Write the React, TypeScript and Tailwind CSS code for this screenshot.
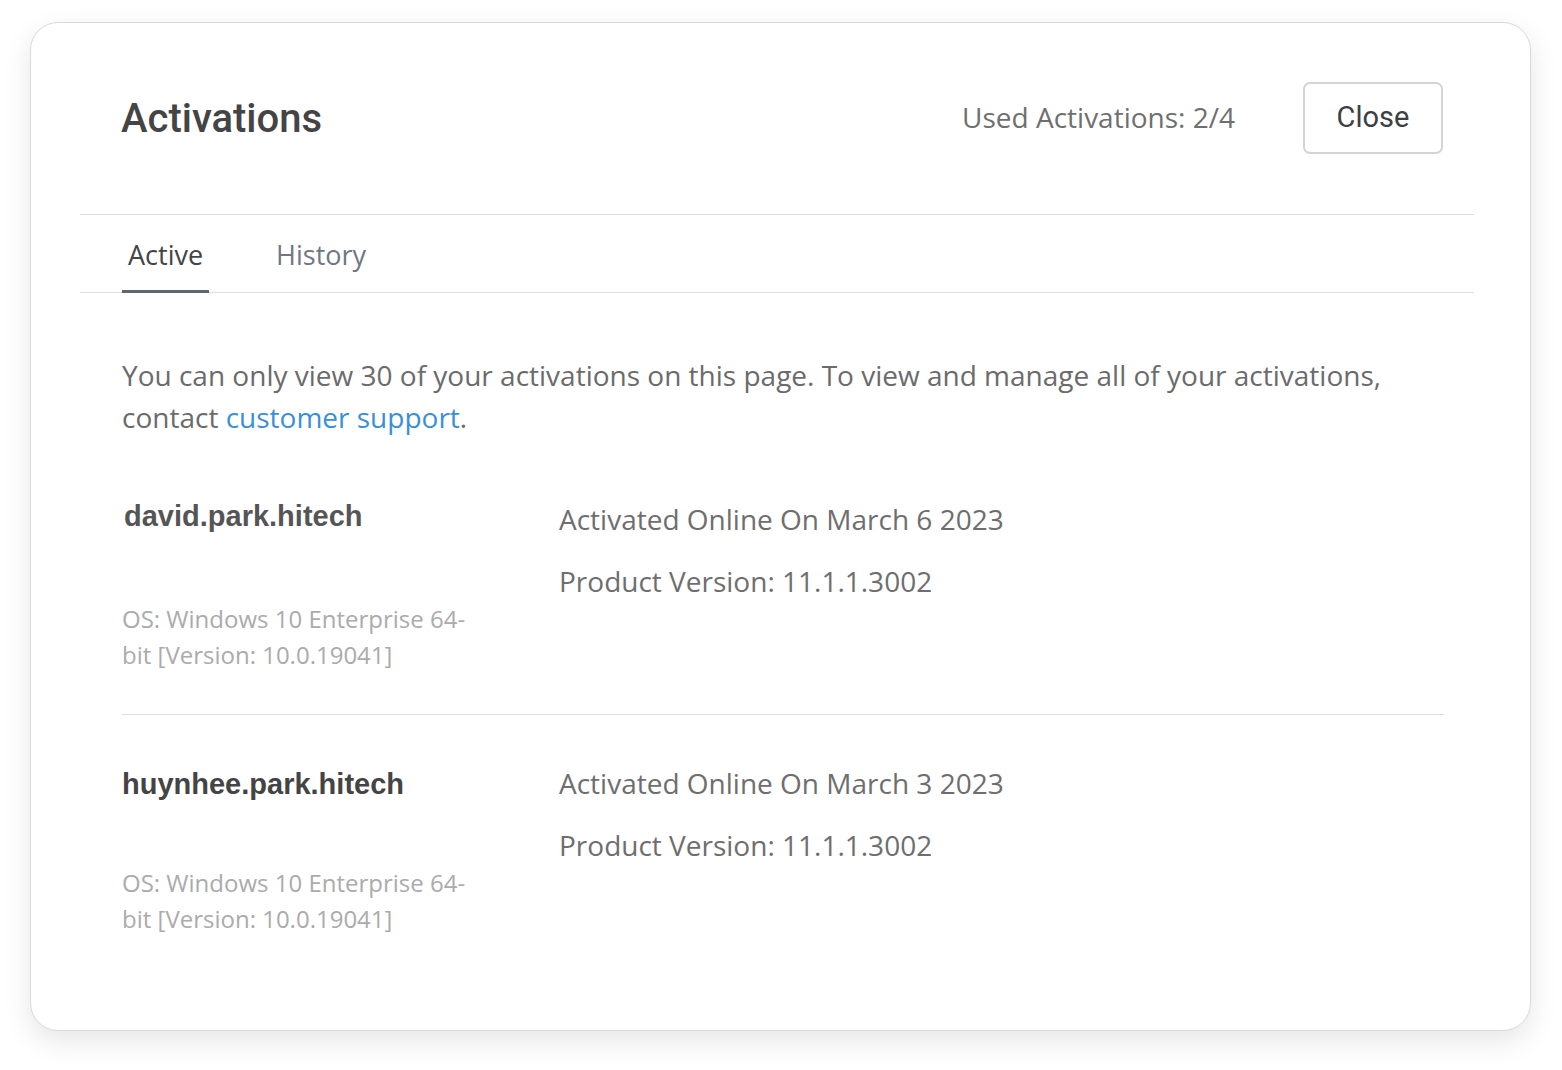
import { useState } from "react";

type Activation = {
  user: string;
  date: string;
  version: string;
  os: string;
};

const activations: Activation[] = [
  {
    user: "david.park.hitech",
    date: "Activated Online On March 6 2023",
    version: "Product Version: 11.1.1.3002",
    os: "OS: Windows 10 Enterprise 64-bit [Version: 10.0.19041]",
  },
  {
    user: "huynhee.park.hitech",
    date: "Activated Online On March 3 2023",
    version: "Product Version: 11.1.1.3002",
    os: "OS: Windows 10 Enterprise 64-bit [Version: 10.0.19041]",
  },
];

function ActivationRow({ item, first }: { item: Activation; first: boolean }) {
  return (
    <div
      className={
        first
          ? "flex pb-[41px] border-b border-[#dedede]"
          : "flex pt-[47px]"
      }
    >
      {/* Left column: user + OS */}
      <div className="w-[437px] shrink-0 flex flex-col">
        <div
          className={
            first
              ? "pl-[2px] -mt-[3px] font-['Liberation_Sans',Arial,sans-serif] font-bold text-[29px] leading-[42px] text-[#555555]"
              : "mt-[1px] font-['Liberation_Sans',Arial,sans-serif] font-bold text-[29px] leading-[42px] text-[#444444]"
          }
        >
          {item.user}
        </div>
        <div
          className={
            first
              ? "mt-[64px] w-[360px] font-['Open_Sans',sans-serif] text-[24px] leading-[36px] text-[#ababab]"
              : "mt-[60px] w-[360px] font-['Open_Sans',sans-serif] text-[24px] leading-[36px] text-[#ababab]"
          }
        >
          {item.os}
        </div>
      </div>

      {/* Right column: details */}
      <div className="flex flex-col gap-[20px] font-['Open_Sans',sans-serif] text-[28px] leading-[42px] text-[#6e6e6e]">
        <div>{item.date}</div>
        <div>{item.version}</div>
      </div>
    </div>
  );
}

export default function App() {
  const [tab, setTab] = useState<"active" | "history">("active");

  return (
    <div className="w-[1562px] h-[1070px] bg-white pt-[22px] pl-[30px]">
      <div className="w-[1501px] h-[1009px] rounded-[28px] border border-[#d9d9d9] bg-white shadow-[0_10px_28px_rgba(0,0,0,0.10)] pl-[49px] pr-[56px]">
        {/* Header */}
        <div className="h-[192px] flex items-center pl-[41px] pr-[31px] border-b border-[#dedede]">
          <h1 className="font-['Roboto',sans-serif] font-medium text-[40px] text-[#444444]">
            Activations
          </h1>
          <div className="ml-auto flex items-center gap-[68px]">
            <span className="-mt-[3px] font-['Open_Sans',sans-serif] text-[28px] text-[#6f6f6f]">
              Used Activations: 2/4
            </span>
            <button className="w-[140px] h-[72px] -mt-[2px] rounded-[7px] border-2 border-[#d4d4d4] bg-white font-['Roboto',sans-serif] text-[29px] text-[#3c4043]">
              Close
            </button>
          </div>
        </div>

        {/* Tabs */}
        <div className="h-[78px] flex items-end gap-[61px] pl-[42px] border-b border-[#dedede]">
          <button
            onClick={() => setTab("active")}
            className={
              tab === "active"
                ? "h-full pt-[4px] px-[6px] -mb-px border-b-[3px] border-[#5f6771] font-['Open_Sans',sans-serif] font-medium text-[27px] text-[#444444]"
                : "h-full pt-[4px] px-[6px] -mb-px border-b-[3px] border-transparent font-['Open_Sans',sans-serif] text-[27px] text-[#707784]"
            }
          >
            Active
          </button>
          <button
            onClick={() => setTab("history")}
            className={
              tab === "history"
                ? "h-full pt-[4px] px-[6px] -mb-px border-b-[3px] border-[#5f6771] font-['Open_Sans',sans-serif] font-medium text-[27px] text-[#444444]"
                : "h-full pt-[4px] px-[6px] -mb-px border-b-[3px] border-transparent font-['Open_Sans',sans-serif] text-[27px] text-[#707784]"
            }
          >
            History
          </button>
        </div>

        {/* Content */}
        <div className="pl-[42px] pr-[30px]">
          <p className="mt-[61px] font-['Open_Sans',sans-serif] text-[28px] leading-[42px] text-[#6b6b6b]">
            You can only view 30 of your activations on this page. To view and manage all of your activations,
            contact <a className="text-[#3b8fd9]">customer support</a>.
          </p>

          <div className="mt-[60px]">
            {activations.map((item, i) => (
              <ActivationRow key={item.user} item={item} first={i === 0} />
            ))}
          </div>
        </div>
      </div>
    </div>
  );
}
